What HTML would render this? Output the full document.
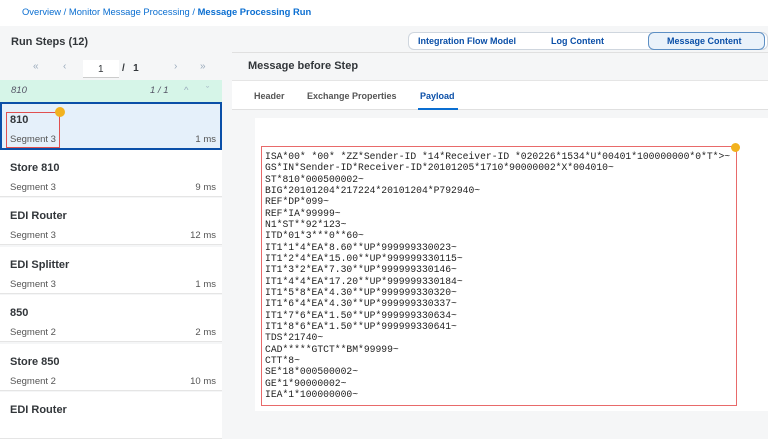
<!DOCTYPE html>
<html><head><meta charset="utf-8"><style>
*{box-sizing:border-box;margin:0;padding:0}
body{width:768px;height:413px;overflow:hidden;background:#f5f6f7;font-family:"Liberation Sans",sans-serif;position:relative;color:#32363a}
.abs{position:absolute}
.bc{left:0;top:0;width:768px;height:26px;background:#fff;font-size:9.4px;color:#0a6ed1;padding:6px 0 0 22px}
.left{left:0;top:26px;width:222px;height:387px;background:#f5f6f7}
.item{position:absolute;left:0;width:222px;height:47px;background:#fff;border-bottom:1px solid #e5e5e5}
.item .t{position:absolute;left:10px;top:12px;font-size:11px;font-weight:bold;color:#32363a}
.item .s{position:absolute;left:10px;top:32px;font-size:9.5px;color:#555}
.item .d{position:absolute;right:6px;top:32px;font-size:9.5px;color:#555}
.mono{font-family:"Liberation Mono",monospace;font-size:9.7px;line-height:11.33px;color:#222;white-space:pre}
</style></head><body>
<div class="abs bc">Overview / Monitor Message Processing / <b>Message Processing Run</b></div>
<div class="abs left"></div>
<div class="abs" style="left:11px;top:36px;font-size:11px;font-weight:bold">Run Steps (12)</div>
<div class="abs" style="left:33px;top:61px;font-size:10px;color:#9ab">«</div>
<div class="abs" style="left:63px;top:61px;font-size:10px;color:#9ab">‹</div>
<div class="abs" style="left:83px;top:60px;width:36px;height:18px;background:#fff;border-bottom:1px solid #ccc;font-size:10px;padding:4px 0 0 15px">1</div>
<div class="abs" style="left:122px;top:63px;font-size:10px;font-weight:bold">/ &nbsp;&nbsp;1</div>
<div class="abs" style="left:174px;top:61px;font-size:10px;color:#9ab">›</div>
<div class="abs" style="left:200px;top:61px;font-size:10px;color:#9ab">»</div>
<div class="abs" style="left:0;top:80px;width:222px;height:22px;background:#d6f5e8;font-size:9.5px;font-style:italic;color:#556;padding:5px 0 0 11px">810<span style="position:absolute;left:150px">1 / 1</span><span style="position:absolute;left:184px;color:#9ab;font-style:normal">^</span><span style="position:absolute;left:206px;color:#9ab;font-style:normal">ˇ</span></div>
<div class="item" style="top:102px;height:48px;background:#e5f0fa;border:2px solid #0a4fa8"><div class="t" style="left:8px;top:10px">810</div><div class="s" style="left:8px;top:30px">Segment 3</div><div class="d" style="right:4px;top:30px">1 ms</div>
<div class="abs" style="left:4px;top:8px;width:54px;height:36px;border:1.5px solid #e05050"></div>
<div class="abs" style="left:53px;top:3px;width:10px;height:10px;border-radius:50%;background:#f2b21e"></div></div>
<div class="item" style="top:150px"><div class="t">Store 810</div><div class="s">Segment 3</div><div class="d">9 ms</div></div>
<div class="item" style="top:198px"><div class="t">EDI Router</div><div class="s">Segment 3</div><div class="d">12 ms</div></div>
<div class="item" style="top:247px"><div class="t">EDI Splitter</div><div class="s">Segment 3</div><div class="d">1 ms</div></div>
<div class="item" style="top:295px"><div class="t">850</div><div class="s">Segment 2</div><div class="d">2 ms</div></div>
<div class="item" style="top:344px"><div class="t">Store 850</div><div class="s">Segment 2</div><div class="d">10 ms</div></div>
<div class="item" style="top:392px"><div class="t">EDI Router</div></div>
<div class="abs" style="left:232px;top:52px;width:536px;height:1px;background:#e0e0e0"></div>
<div class="abs" style="left:408px;top:32px;width:360px;height:18px;background:#fff;border:1px solid #cfd6de;border-radius:6px"></div>
<div class="abs" style="left:418px;top:36px;font-size:9px;font-weight:bold;color:#0a4fa8">Integration Flow Model</div>
<div class="abs" style="left:551px;top:36px;font-size:9px;font-weight:bold;color:#0a4fa8">Log Content</div>
<div class="abs" style="left:648px;top:32px;width:117px;height:18px;background:#eaf2fa;border:1px solid #5d8fc4;border-radius:6px;font-size:9px;font-weight:bold;color:#0a4fa8;padding:3px 0 0 18px">Message Content</div>
<div class="abs" style="left:248px;top:60px;font-size:11px;font-weight:bold">Message before Step</div>
<div class="abs" style="left:232px;top:80px;width:536px;height:30px;background:#fff;border-top:1px solid #e5e5e5;border-bottom:1px solid #e0e0e0"></div>
<div class="abs" style="left:254px;top:91px;font-size:9px;font-weight:bold;color:#555">Header</div>
<div class="abs" style="left:307px;top:91px;font-size:9px;font-weight:bold;color:#555">Exchange Properties</div>
<div class="abs" style="left:420px;top:91px;font-size:9px;font-weight:bold;color:#0a4fa8">Payload</div>
<div class="abs" style="left:418px;top:108px;width:40px;height:2px;background:#0a6ed1"></div>
<div class="abs" style="left:255px;top:118px;width:513px;height:293px;background:#fff"></div>
<div class="abs" style="left:261px;top:146px;width:476px;height:260px;border:1.5px solid #e86a6a"></div>
<div class="abs" style="left:731px;top:143px;width:9px;height:9px;border-radius:50%;background:#f2b21e"></div>
<div class="abs mono" style="left:265px;top:151px">ISA*00* *00* *ZZ*Sender-ID *14*Receiver-ID *020226*1534*U*00401*100000000*0*T*>~
GS*IN*Sender-ID*Receiver-ID*20101205*1710*90000002*X*004010~
ST*810*000500002~
BIG*20101204*217224*20101204*P792940~
REF*DP*099~
REF*IA*99999~
N1*ST**92*123~
ITD*01*3***0**60~
IT1*1*4*EA*8.60**UP*999999330023~
IT1*2*4*EA*15.00**UP*999999330115~
IT1*3*2*EA*7.30**UP*999999330146~
IT1*4*4*EA*17.20**UP*999999330184~
IT1*5*8*EA*4.30**UP*999999330320~
IT1*6*4*EA*4.30**UP*999999330337~
IT1*7*6*EA*1.50**UP*999999330634~
IT1*8*6*EA*1.50**UP*999999330641~
TDS*21740~
CAD*****GTCT**BM*99999~
CTT*8~
SE*18*000500002~
GE*1*90000002~
IEA*1*100000000~</div>
</body></html>
